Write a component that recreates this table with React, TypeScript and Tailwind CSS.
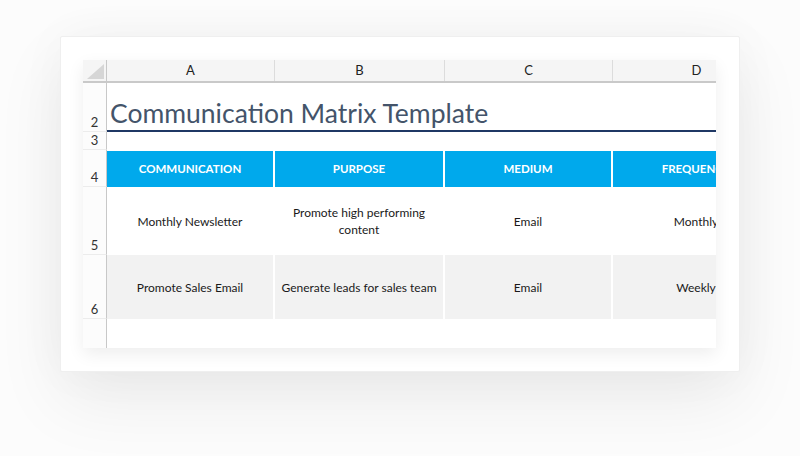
import React from 'react';

const font = { fontFamily: 'Lato, "Open Sans", sans-serif' };

const rows = [
  { label: '5', h: 'h-[68px]', bg: 'bg-white', cells: ['Monthly Newsletter', 'Promote high performing\ncontent', 'Email', 'Monthly'] },
  { label: '6', h: 'h-[64px]', bg: 'bg-[#f2f2f2]', cells: ['Promote Sales Email', 'Generate leads for sales team', 'Email', 'Weekly'] },
];

const headers = ['COMMUNICATION', 'PURPOSE', 'MEDIUM', 'FREQUENCY'];
const letters = ['A', 'B', 'C', 'D'];
const widths = ['w-[168px]', 'w-[170px]', 'w-[168px]', 'w-[168px]'];

const RowLabel: React.FC<{ label?: string; h: string }> = ({ label, h }) => (
  <div className={`${h} w-[24px] shrink-0 flex items-end justify-center pb-[2px] border-b border-[#ececec] border-r border-r-[#c8c8c8] bg-[#fcfcfc] text-[13px] text-[#333] leading-none`}>
    {label}
  </div>
);

const App: React.FC = () => {
  return (
    <div className="w-[800px] h-[456px] bg-[#fcfcfc] pt-[36px] pl-[60px] overflow-hidden" style={font}>
      {/* Card */}
      <div className="w-[680px] h-[336px] bg-white border border-[#efefef] rounded-[2px] pt-[23px] pl-[22px] shadow-[0_28px_70px_rgba(0,0,0,0.07),0_0_50px_rgba(0,0,0,0.035)]">
        {/* Sheet */}
        <div className="w-[633px] h-[288px] bg-white overflow-hidden flex flex-col shadow-[0_6px_16px_rgba(0,0,0,0.07)]">
          {/* Column letters */}
          <div className="flex h-[23px] shrink-0 bg-[#f5f5f5] border-b-2 border-[#c9c9c9]">
            <div className="w-[24px] shrink-0 relative border-r border-[#c8c8c8]">
              <svg className="absolute left-[4px] top-[4px]" width="17" height="15" viewBox="0 0 17 15">
                <polygon points="17,0 17,15 0,15" fill="#d6d6d6" />
              </svg>
            </div>
            {letters.map((l, i) => (
              <div key={l} className={`${widths[i]} shrink-0 flex items-center justify-center text-[13px] text-[#222] border-r border-[#dcdcdc]`}>
                {l}
              </div>
            ))}
          </div>

          {/* Row 2 - title */}
          <div className="flex h-[49px] shrink-0">
            <RowLabel label="2" h="h-[49px]" />
            <div className="flex-1 border-b-2 border-[#1f3864] flex items-end pl-[3px] pb-[4px]">
              <span className="text-[26.5px] text-[#44546a] leading-none whitespace-nowrap">Communication Matrix Template</span>
            </div>
          </div>

          {/* Row 3 */}
          <div className="flex h-[18px] shrink-0">
            <RowLabel label="3" h="h-[18px]" />
            <div className="flex-1" />
          </div>

          {/* Row 4 - headers */}
          <div className="flex h-[37px] shrink-0">
            <RowLabel label="4" h="h-[37px]" />
            {headers.map((t, i) => (
              <div key={t} className={`${widths[i]} shrink-0 pr-[2px] pt-[1px]`}>
                <div className="h-full bg-[#00a9ec] flex items-center justify-center text-white font-bold text-[11.5px] whitespace-nowrap overflow-hidden">
                  {t}
                </div>
              </div>
            ))}
          </div>

          {/* Data rows */}
          {rows.map((r) => (
            <div key={r.label} className={`flex ${r.h} shrink-0`}>
              <RowLabel label={r.label} h={r.h} />
              {r.cells.map((c, i) => (
                <div key={i} className={`${widths[i]} shrink-0 pr-[2px]`}>
                  <div className={`h-full ${r.bg} flex items-center justify-center text-center text-[12px] leading-[17px] text-[#1a1a1a] px-1 whitespace-pre-line`}>
                    {c}
                  </div>
                </div>
              ))}
            </div>
          ))}

          {/* Filler */}
          <div className="flex flex-1">
            <div className="w-[24px] shrink-0 border-r border-[#c8c8c8] bg-[#fcfcfc]" />
            <div className="flex-1" />
          </div>
        </div>
      </div>
    </div>
  );
};

export default App;
